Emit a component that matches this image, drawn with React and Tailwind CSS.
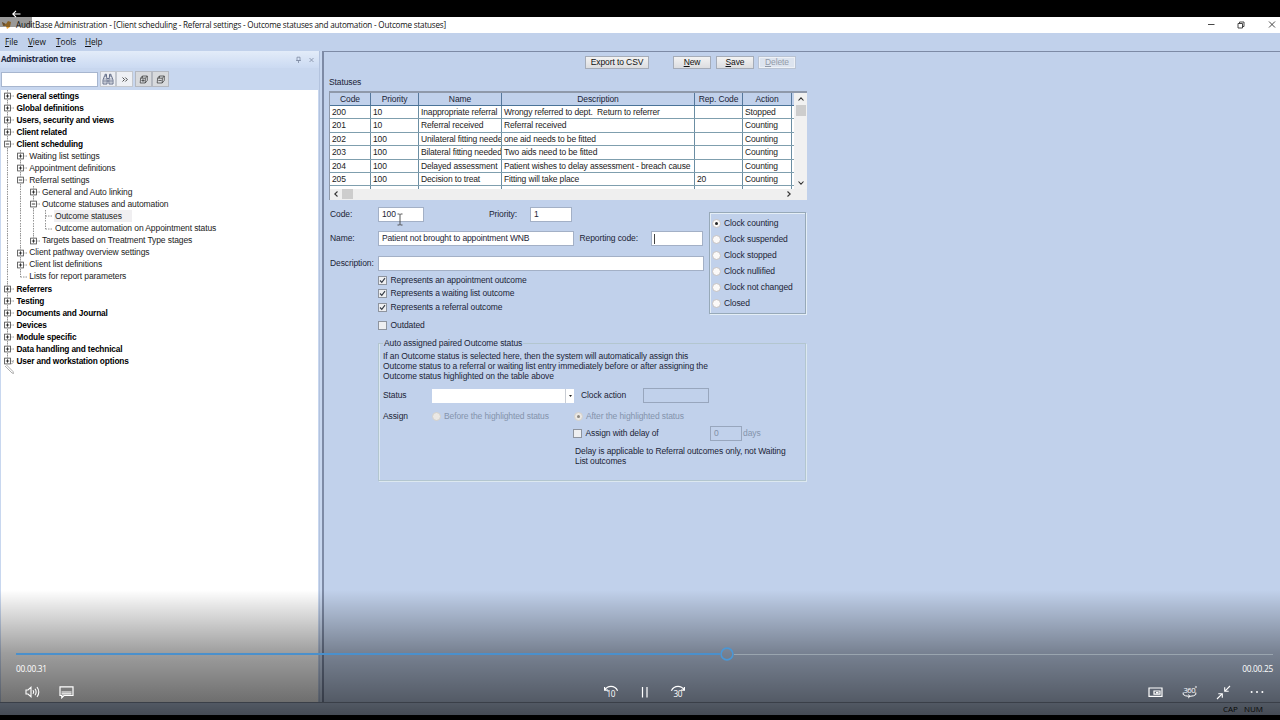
import React, { useState } from 'react';

const treeItems = [
  { label: 'General settings', level: 0, icon: 'plus' },
  { label: 'Global definitions', level: 0, icon: 'plus' },
  { label: 'Users, security and views', level: 0, icon: 'plus' },
  { label: 'Client related', level: 0, icon: 'plus' },
  { label: 'Client scheduling', level: 0, icon: 'minus' },
  { label: 'Waiting list settings', level: 1, icon: 'plus' },
  { label: 'Appointment definitions', level: 1, icon: 'plus' },
  { label: 'Referral settings', level: 1, icon: 'minus' },
  { label: 'General and Auto linking', level: 2, icon: 'plus' },
  { label: 'Outcome statuses and automation', level: 2, icon: 'minus' },
  { label: 'Outcome statuses', level: 3, icon: 'leaf', selected: true },
  { label: 'Outcome automation on Appointment status', level: 3, icon: 'leaf', last: true },
  { label: 'Targets based on Treatment Type stages', level: 2, icon: 'plus', last: true },
  { label: 'Client pathway overview settings', level: 1, icon: 'plus' },
  { label: 'Client list definitions', level: 1, icon: 'plus' },
  { label: 'Lists for report parameters', level: 1, icon: 'leaf', last: true },
  { label: 'Referrers', level: 0, icon: 'plus' },
  { label: 'Testing', level: 0, icon: 'plus' },
  { label: 'Documents and Journal', level: 0, icon: 'plus' },
  { label: 'Devices', level: 0, icon: 'plus' },
  { label: 'Module specific', level: 0, icon: 'plus' },
  { label: 'Data handling and technical', level: 0, icon: 'plus' },
  { label: 'User and workstation options', level: 0, icon: 'plus', last: true },
];

const columns = ['Code', 'Priority', 'Name', 'Description', 'Rep. Code', 'Action'];

const statuses = [
  ['200', '10', 'Inappropriate referral', 'Wrongy referred to dept.  Return to referrer', '', 'Stopped'],
  ['201', '10', 'Referral received', 'Referral received', '', 'Counting'],
  ['202', '100', 'Unilateral fitting neede', 'one aid needs to be fitted', '', 'Counting'],
  ['203', '100', 'Bilateral fitting needed', 'Two aids need to be fitted', '', 'Counting'],
  ['204', '100', 'Delayed assessment', 'Patient wishes to delay assessment - breach cause', '', 'Counting'],
  ['205', '100', 'Decision to treat', 'Fitting will take place', '20', 'Counting'],
];

const clockOptions = [
  'Clock counting',
  'Clock suspended',
  'Clock stopped',
  'Clock nullified',
  'Clock not changed',
  'Closed',
];

const gridCols = 'grid grid-cols-[41px_48px_83px_193px_48px_49px_1fr]';

function TreeToggle({ icon, last }) {
  return (
    <svg className="w-[13px] h-full shrink-0" viewBox="0 0 13 12" fill="none" stroke="#777" strokeWidth="0.8">
      <path d={last ? 'M3.5 0V6' : 'M3.5 0V12'} strokeDasharray="1.5 1" />
      <path d="M3.5 6H11" strokeDasharray="1.5 1" />
      {icon !== 'leaf' && <rect x="0.6" y="3.1" width="5.8" height="5.8" fill="#fff" stroke="#444" />}
      {icon !== 'leaf' && <path d="M1.8 6H5.2" stroke="#111" />}
      {icon === 'plus' && <path d="M3.5 4.3V7.7" stroke="#111" />}
    </svg>
  );
}

function TreeRow({ item }) {
  const guides = Array.from({ length: item.level });
  return (
    <div className="flex h-[12.06px] items-center">
      {guides.map((_, i) => (
        <svg key={i} className="w-[12.8px] h-full shrink-0" viewBox="0 0 12.8 12" stroke="#777" strokeWidth="0.8">
          <path d="M3.5 0V12" strokeDasharray="1.5 1" />
        </svg>
      ))}
      <TreeToggle icon={item.icon} last={item.last} />
      <span
        className={
          item.level === 0
            ? 'font-bold text-[8.3px] tracking-[-0.16px] text-black -ml-[0.5px]'
            : item.selected
              ? 'bg-[#f0eff1] -ml-[1.5px] pl-[1px] pr-[10px] leading-[12px]'
              : '-ml-[0.5px]'
        }
      >
        {item.label}
      </span>
    </div>
  );
}

function Button({ children, className = '', disabled }) {
  return (
    <button
      className={`h-[13px] leading-[11px] border text-center ${
        disabled
          ? 'border-[#b9c3d3] bg-[#dde4ef] text-[#929aa8] shadow-[inset_0_0_0_1px_#eef1f6]'
          : 'border-[#a5acb8] bg-linear-to-b from-[#f3f3f3] to-[#dcdde0] text-[#111]'
      } ${className}`}
    >
      {children}
    </button>
  );
}

function Input({ value, className = '', disabled }) {
  return (
    <div
      className={`h-[15px] border leading-[12px] pl-[3px] whitespace-nowrap tracking-[-0.14px] ${
        disabled ? 'border-[#98a6bd] text-[#8290a6]' : 'border-[#a3b0c6] bg-white'
      } ${className}`}
    >
      {value}
    </div>
  );
}

function Checkbox({ label, checked, className = '' }) {
  return (
    <div className={`flex items-center gap-[3.5px] ${className}`}>
      <span className="w-[9px] h-[9px] border border-[#8e949e] bg-[#eeeff1] shrink-0">
        {checked && (
          <svg className="w-[7px] h-[7px]" viewBox="0 0 7 7" fill="none" stroke="#333a45" strokeWidth="1.1">
            <path d="M1 3.5L2.8 5.3L6 1.2" />
          </svg>
        )}
      </span>
      <span>{label}</span>
    </div>
  );
}

function Radio({ label, checked, disabled, onClick, className = '' }) {
  return (
    <div
      className={`flex items-center gap-[3px] ${disabled ? 'text-[#8493ab]' : ''} ${className}`}
      onClick={onClick}
    >
      <span
        className={`w-[9px] h-[9px] rounded-full border flex items-center justify-center shrink-0 ${
          disabled ? 'border-[#d2d0cc] bg-[#ebe8e4]' : 'border-[#c5c2c2] bg-[#fbf9f8]'
        }`}
      >
        {checked && <span className={`w-[3px] h-[3px] rounded-full ${disabled ? 'bg-[#8a8780]' : 'bg-[#222]'}`} />}
      </span>
      <span>{label}</span>
    </div>
  );
}

function TitleBar() {
  return (
    <div className="h-4 bg-white flex items-center font-['Open_Sans',sans-serif] text-[8.1px] tracking-[-0.2px] text-[#111]">
      <svg className="w-[11px] h-[11px] ml-[1px] mr-[4px]" viewBox="0 0 11 11">
        <path d="M1 2L5 4L7 1L10 2L9 7L6 9L5 6L2 6Z" fill="#e8a33c" />
        <path d="M1 2L4 4L3 6Z" fill="#8d7460" />
      </svg>
      <span className="whitespace-pre">
        AuditBase Administration - [Client scheduling - Referral settings - Outcome statuses and automation - Outcome statuses]
      </span>
      <svg className="w-[70px] h-[10px] ml-auto mr-[2px]" viewBox="0 0 70 10" fill="none" stroke="#333" strokeWidth="0.9">
        <path d="M0 4.5H6.5" />
        <path d="M30 3.5h4.5v4.5h-4.5zM31.5 3.5V2h4.5v4.5h-1.5" />
        <path d="M61 1.5L67 7.5M67 1.5L61 7.5" />
      </svg>
    </div>
  );
}

function MenuBar() {
  return (
    <div className="h-[18px] flex items-center bg-[#c1d1eb] font-['Open_Sans',sans-serif] text-[8.3px] tracking-[-0.1px] text-[#111] pl-[5px]">
      <span className="w-[23px]"><u>F</u>ile</span>
      <span className="w-[28px]"><u>V</u>iew</span>
      <span className="w-[29px]"><u>T</u>ools</span>
      <span><u>H</u>elp</span>
    </div>
  );
}

function TreePanel() {
  return (
    <div className="w-[320px] h-full flex flex-col border-r border-[#b3c3de] bg-[#c8d7ef]">
      <div className="h-[17px] shrink-0 flex items-center bg-linear-to-b from-[#e3ecf9] to-[#cbdaf2] pl-[1px] pr-[4px] font-['Open_Sans',sans-serif] text-[8.1px] tracking-[-0.3px] font-bold text-[#1d2a44]">
        Administration tree
        <svg className="w-[20px] h-[8px] ml-auto" viewBox="0 0 20 8" fill="none" stroke="#7f8ca3" strokeWidth="0.8">
          <path d="M2 1.2h3v3.3h-3zM1 4.5h5M3.5 4.5V7" />
          <path d="M14.5 2L18.5 6M18.5 2L14.5 6" />
        </svg>
      </div>
      <div className="h-[22px] shrink-0 flex items-center pl-[1px]">
        <div className="w-[97px] h-[15px] bg-white border border-[#a7b6cf]" />
        <div className="w-[16px] h-[16px] ml-[2px] border border-[#c3c7ce] bg-[#eceef2] flex items-center justify-center">
          <svg className="w-[12px] h-[12px]" viewBox="0 0 12 12" fill="none" stroke="#66708a" strokeWidth="1">
            <path d="M1 11V7L2.5 3H4.5L5 7V11ZM7 11V7L7.5 3H9.5L11 7V11ZM5 5.5H7M5 8H7M3 3V1.3H4.5V3M7.5 3V1.3H9V3" />
            <path d="M1 8H5M7 8H11M3 5V10M9 5V10" strokeWidth="0.6" />
          </svg>
        </div>
        <div className="w-[17px] h-[16px] border border-[#c3c7ce] bg-[#eef0f4] flex items-center justify-center">
          <svg className="w-[6px] h-[5px]" viewBox="0 0 6 5" fill="none" stroke="#222" strokeWidth="0.8">
            <path d="M0.5 0.5L2.5 2.5L0.5 4.5M3.3 0.5L5.3 2.5L3.3 4.5" />
          </svg>
        </div>
        {['M2.4 5.5H5.6M4 3.9V7.1', 'M2.4 5.5H5.6'].map((d, i) => (
          <div
            key={i}
            className={`h-[16px] border border-[#b4b8c0] bg-[#d8dadd] flex items-center justify-center ${i === 0 ? 'w-[17px] ml-[2px]' : 'w-[17px]'}`}
          >
            <svg className="w-[9px] h-[9px]" viewBox="0 0 9 9" fill="none" stroke="#333" strokeWidth="0.7">
              <path d="M3.4 3V1H8.3V5.4L6.2 8H1.2L1.6 3.2H6.4L6.2 8M1.6 3.2L3.4 1M6.4 3.2L8.3 1" />
              <path d={d} />
            </svg>
          </div>
        ))}
      </div>
      <div className="relative flex-1 min-h-0 ml-[1px] mr-[1px] bg-white pl-[3px] text-[#222] whitespace-nowrap">
        {treeItems.map((item) => (
          <TreeRow key={item.label} item={item} />
        ))}
        <svg className="absolute left-[3px] top-[266px] w-[12px] h-[20px]" viewBox="0 0 12 20" fill="none" stroke="#999" strokeWidth="0.8">
          <path d="M1 10L8 17M2.5 9L9 15.5M8 17L9.5 17.5L9 15.5M8 6L9.5 4.5M7 8L9.5 6.5" />
        </svg>
      </div>
    </div>
  );
}

function StatusTable() {
  return (
    <div className="w-[478px] h-[109px] border-t-2 border-l border-[#8f99aa] bg-[#efefef] flex flex-col">
      <div className="flex h-[95.5px]">
        <div className="w-[464px] h-full overflow-hidden bg-white">
          <div className={`${gridCols} h-[13px] bg-[#c1d1eb] text-center leading-[12px] border-b border-[#4a7398]`}>
            {columns.map((col) => (
              <div key={col} className="border-r border-[#56789c]">{col}</div>
            ))}
            <div />
          </div>
          {statuses.map((row) => (
            <div key={row[0]} className={`${gridCols} h-[13.4px] leading-[13px] border-b border-[#7f9fae]`}>
              {row.map((cell, i) => (
                <div key={i} className="border-r border-[#6b8ea3] pl-[2px] overflow-hidden whitespace-pre tracking-[-0.14px] text-[#222]">{cell}</div>
              ))}
              <div />
            </div>
          ))}
          <div className={`${gridCols} h-[4px]`}>
            {columns.map((col) => (
              <div key={col} className="border-r border-[#6b8ea3]" />
            ))}
          </div>
        </div>
        <div className="flex-1 bg-[#f1f1f1] flex flex-col items-center pt-[4px]">
          <svg className="w-[6px] h-[4px]" viewBox="0 0 6 4" fill="none" stroke="#333" strokeWidth="1.1"><path d="M0.5 3.5L3 0.8L5.5 3.5" /></svg>
          <div className="w-[10px] h-[11px] bg-[#cdcdcd] mt-[4px]" />
          <svg className="w-[6px] h-[4px] mt-auto mb-[4px]" viewBox="0 0 6 4" fill="none" stroke="#333" strokeWidth="1.1"><path d="M0.5 0.5L3 3.2L5.5 0.5" /></svg>
        </div>
      </div>
      <div className="flex-1 flex items-center pl-[4px] pr-[16px]">
        <svg className="w-[4px] h-[6px]" viewBox="0 0 4 6" fill="none" stroke="#333" strokeWidth="1.1"><path d="M3.5 0.5L0.8 3L3.5 5.5" /></svg>
        <div className="w-[11px] h-[10px] bg-[#cdcdcd] ml-[4px]" />
        <svg className="w-[4px] h-[6px] ml-auto" viewBox="0 0 4 6" fill="none" stroke="#333" strokeWidth="1.1"><path d="M0.5 0.5L3.2 3L0.5 5.5" /></svg>
      </div>
    </div>
  );
}

function StatusForm() {
  const [clock, setClock] = useState('Clock counting');

  return (
    <div className="flex w-[478px] h-[138px]">
      <div className="w-[380px] pl-[1px] pt-[7px]">
        <div className="flex h-[15px] items-center mb-[9px]">
          <span className="w-[48px]">Code:</span>
          <div className="relative">
            <Input value="100" className="w-[46px]" />
            <svg className="absolute left-[18px] top-[6px] w-[8px] h-[13px]" viewBox="0 0 8 13" fill="none" stroke="#444" strokeWidth="0.9">
              <path d="M1.5 1H3.5L4 1.5L4.5 1H6.5M4 1.5V11.5M1.5 12H3.5L4 11.5L4.5 12H6.5" />
            </svg>
          </div>
          <span className="ml-[65px] w-[41px]">Priority:</span>
          <Input value="1" className="w-[42px]" />
        </div>
        <div className="flex h-[15px] items-center mb-[10px]">
          <span className="w-[48px]">Name:</span>
          <Input value="Patient not brought to appointment WNB" className="w-[196px]" />
          <span className="ml-[5.5px] w-[71.5px]">Reporting code:</span>
          <Input value={<span className="inline-block w-px h-[10px] bg-[#444] align-middle -ml-px" />} className="w-[52px]" />
        </div>
        <div className="flex h-[15px] items-center">
          <span className="w-[48px]">Description:</span>
          <Input value="" className="w-[326px]" />
        </div>
        <div className="pl-[48px] pt-[2px]">
          <Checkbox label="Represents an appointment outcome" checked className="h-[14px]" />
          <Checkbox label="Represents a waiting list outcome" checked className="h-[13.5px]" />
          <Checkbox label="Represents a referral outcome" checked className="h-[13.5px]" />
          <Checkbox label="Outdated" className="h-[13px] mt-[5px]" />
        </div>
      </div>
      <div className="w-[97px] h-[102px] mt-[12px] border border-[#97a9b8] shadow-[1px_1px_0_#e4eef6,inset_1px_1px_0_#e4eef6] pl-[2px] pt-[2px]">
        {clockOptions.map((option) => (
          <Radio
            key={option}
            label={option}
            checked={clock === option}
            onClick={() => setClock(option)}
            className="h-[16.1px]"
          />
        ))}
      </div>
    </div>
  );
}

function PairedStatus() {
  return (
    <fieldset className="ml-[49px] w-[428px] h-[143px] border border-[#b3c6cf] shadow-[1px_1px_0_#dce8f0,inset_1px_0_0_#dce8f0] pl-[4px]">
      <legend className="px-px h-[10px] leading-[10px]">Auto assigned paired Outcome status</legend>
      <p className="leading-[10px] mt-[3px]">
        If an Outcome status is selected here, then the system will automatically assign this
        <br />
        Outcome status to a referral or waiting list entry immediately before or after assigning the
        <br />
        Outcome status highlighted on the table above
      </p>
      <div className="flex items-center h-[15px] mt-[7px]">
        <span className="w-[49px]">Status</span>
        <div className="w-[142px] h-[14px] bg-white flex justify-end">
          <span className="w-[9px] border-l border-[#c9cdd4] flex items-center justify-center">
            <svg className="w-[3px] h-[2px]" viewBox="0 0 3 2"><path d="M0 0H3L1.5 2Z" fill="#222" /></svg>
          </span>
        </div>
        <span className="ml-[7px] w-[62px]">Clock action</span>
        <Input value="" disabled className="w-[66px]" />
      </div>
      <div className="flex items-center h-[12px] mt-[7px]">
        <span className="w-[49px]">Assign</span>
        <Radio label="Before the highlighted status" disabled className="w-[142px]" />
        <Radio label="After the highlighted status" checked disabled />
      </div>
      <div className="flex items-center h-[15px] mt-[4px] pl-[190px]">
        <Checkbox label="Assign with delay of" className="w-[137px]" />
        <Input value="0" disabled className="w-[32px]" />
        <span className="text-[#8493ab] ml-px">days</span>
      </div>
      <p className="pl-[192px] leading-[10px] mt-[5px]">
        Delay is applicable to Referral outcomes only, not Waiting
        <br />
        List outcomes
      </p>
    </fieldset>
  );
}

function StatusPanel() {
  return (
    <div className="flex-1 ml-[2px] h-full border-t border-l-2 border-[#7d8aa5] bg-[#c1d1eb] pl-[5px] pt-[4px] text-[#1b2436]">
      <div className="flex w-[467px] h-[13px] justify-end">
        <Button className="w-[64px]">Export to CSV</Button>
        <Button className="w-[38px] ml-[24px]"><u>N</u>ew</Button>
        <Button className="w-[38px] ml-[5px]"><u>S</u>ave</Button>
        <Button className="w-[38px] ml-[4px]" disabled><u>D</u>elete</Button>
      </div>
      <div className="h-[22px] pt-[7px] leading-[12px]">Statuses</div>
      <StatusTable />
      <StatusForm />
      <PairedStatus />
    </div>
  );
}

function PlayerControls() {
  return (
    <div className="absolute inset-x-0 top-[590px] h-[125px] text-white font-['Open_Sans',sans-serif] bg-[linear-gradient(to_bottom,rgba(0,0,0,0)_0%,rgba(0,0,0,0.1)_13%,rgba(0,0,0,0.38)_50%,rgba(0,0,0,0.45)_65%,rgba(0,0,0,0.56)_88%,rgba(0,0,0,0.64)_100%)]">
      <div className="h-[14px] mt-[57px] ml-[16px] mr-[7px] flex items-center">
        <div className="w-[704px] h-[1.5px] bg-[#4a90cc]" />
        <svg className="w-[14px] h-[14px] shrink-0" viewBox="0 0 14 14" fill="none" stroke="#4a97d6" strokeWidth="1.6">
          <circle cx="7" cy="7" r="5.9" />
        </svg>
        <div className="flex-1 h-px bg-[#9aa5af]" />
      </div>
      <div className="h-[15px] flex items-center justify-between pl-[16px] pr-[7px] pt-[1px] text-[8.3px] tracking-[-0.25px]">
        <span>00.00.31</span>
        <span>00.00.25</span>
      </div>
      <div className="h-[16px] mt-[8px] flex items-center justify-between pl-[25px] pr-[16px]">
        <div className="flex items-center gap-[19px] w-[259px]">
          <svg className="w-[15px] h-[14px]" viewBox="0 0 15 14" fill="none" stroke="#fff" strokeWidth="1.1">
            <path d="M1 5H3L6 2.3V11.7L3 9H1ZM8 5.2Q9.3 7 8 8.8M10 3.7Q12.3 7 10 10.3M12 2Q15.6 7 12 12" />
          </svg>
          <svg className="w-[15px] h-[14px]" viewBox="0 0 15 14" fill="none" stroke="#fff" strokeWidth="1.2">
            <path d="M1 1.8H14V10.5H5L2.8 12.7V10.5H1ZM2.5 7H12.5M2.5 8.8H12.5" />
          </svg>
        </div>
        <div className="flex items-center gap-[19px]">
          <svg className="w-[16px] h-[18px]" viewBox="0 0 16 18" fill="none" stroke="#fff" strokeWidth="1.2">
            <path d="M1.6 4V7.2H5M1.8 7Q4 3.4 8 3.4Q12.5 3.4 14.6 7.7" />
            <text x="3.4" y="14.2" fontSize="8.2" letterSpacing="-0.4" fill="#fff" stroke="none">10</text>
          </svg>
          <svg className="w-[8px] h-[12px] mx-[2.5px]" viewBox="0 0 8 12" stroke="#fff" strokeWidth="1.2">
            <path d="M1.5 1V11.5M6 1V11.5" />
          </svg>
          <svg className="w-[16px] h-[18px]" viewBox="0 0 16 18" fill="none" stroke="#fff" strokeWidth="1.2">
            <path d="M14.4 4V7.2H11M14.2 7Q12 3.4 8 3.4Q3.5 3.4 1.4 7.7" />
            <text x="3.4" y="14.2" fontSize="8.2" letterSpacing="-0.4" fill="#fff" stroke="none">30</text>
          </svg>
        </div>
        <div className="flex items-center gap-[19px] w-[259px] justify-end">
          <svg className="w-[15px] h-[12px]" viewBox="0 0 15 12" fill="none" stroke="#fff" strokeWidth="1.2">
            <path d="M1 2H14V10.3H1ZM6 5H12V8.2H6ZM8 6.6H10.5" />
          </svg>
          <svg className="w-[15px] h-[14px]" viewBox="0 0 15 14" fill="none" stroke="#fff" strokeWidth="1">
            <text x="1.4" y="8" fontSize="7.6" letterSpacing="-0.4" fill="#fff" stroke="none">360</text>
            <path d="M1.2 7.5Q0 9.8 3.5 10.8Q7.5 12 11.5 10.8Q15 9.8 13.8 7.5M6.2 9.6L8 11.3L6.2 13" />
            <circle cx="13.9" cy="2" r="0.7" strokeWidth="0.6" />
          </svg>
          <svg className="w-[15px] h-[15px]" viewBox="0 0 15 15" fill="none" stroke="#fff" strokeWidth="1.1">
            <path d="M14 1L8.7 6.3M8.7 2.3V6.3H12.7M1 14L6.3 8.7M2.3 8.7H6.3V12.7" />
          </svg>
          <svg className="w-[14px] h-[4px]" viewBox="0 0 14 4" fill="#fff">
            <circle cx="1.6" cy="2" r="1" />
            <circle cx="7" cy="2" r="1" />
            <circle cx="12.4" cy="2" r="1" />
          </svg>
        </div>
      </div>
    </div>
  );
}

function App() {
  return (
    <div className="relative w-[1280px] h-[720px] overflow-hidden bg-black pt-[17px] font-['Liberation_Sans',Arial,sans-serif] text-[8.5px] tracking-[-0.1px]">
      <TitleBar />
      <MenuBar />
      <div className="flex h-[651px] bg-[#c8d7ef]">
        <TreePanel />
        <StatusPanel />
      </div>
      <div className="h-[13px] border-t border-[#8793a8] bg-[#c1d1eb] flex items-center justify-end gap-[6px] pr-[17px] font-['Open_Sans',sans-serif] text-[8px] tracking-normal text-[#111]">
        <span>CAP</span>
        <span>NUM</span>
      </div>
      <PlayerControls />
      <div className="absolute left-0 top-0 w-[32px] h-[27px] bg-black/40">
        <svg className="w-[9px] h-[8px] ml-[12px] mt-[10px]" viewBox="0 0 9 8" fill="none" stroke="#fff" strokeWidth="1.1">
          <path d="M8.5 4H0.8M4 0.8L0.8 4L4 7.2" />
        </svg>
      </div>
    </div>
  );
}

export default App;
